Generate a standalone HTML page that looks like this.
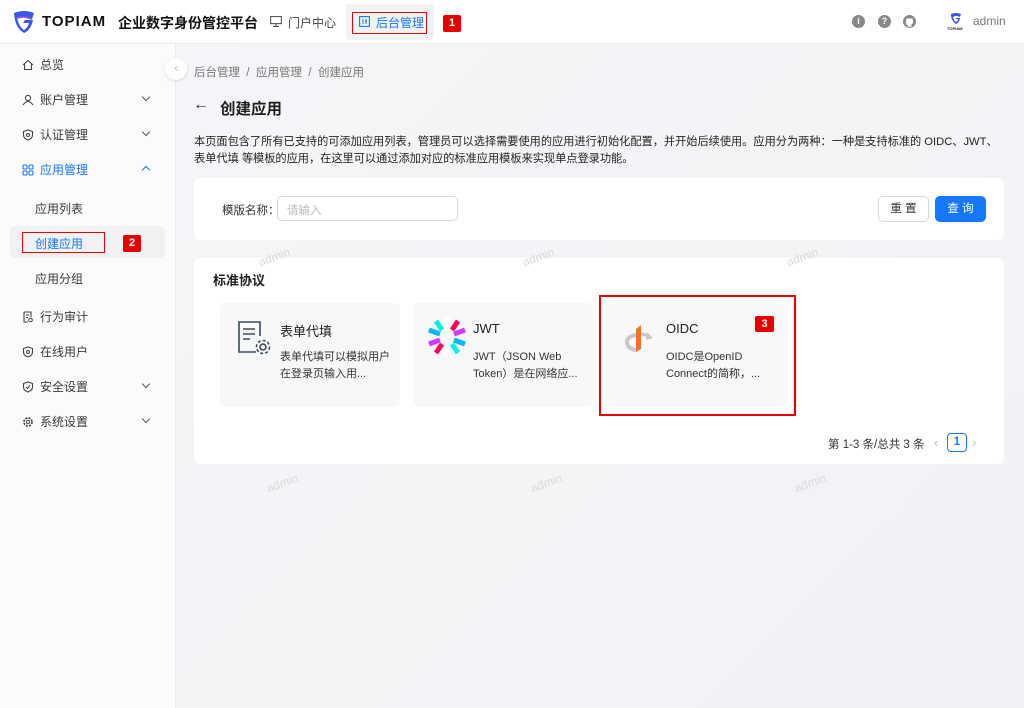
<!DOCTYPE html>
<html><head><meta charset="utf-8">
<style>
*{margin:0;padding:0;box-sizing:border-box}
body{width:1024px;height:708px;overflow:hidden;font-family:"Liberation Sans","Noto Sans CJK SC",sans-serif;background:linear-gradient(135deg,#f5f6f8,#f1f2f5);color:#262626;position:relative;font-size:12px}
.hdr{position:absolute;left:0;top:0;width:1024px;height:44px;background:#fff;border-bottom:1px solid #ececec}
.side{position:absolute;left:0;top:44px;width:176px;height:664px;background:#fbfbfc;border-right:1px solid #ececec}
.abs{position:absolute}
.mi{position:absolute;left:22px;font-size:12px;color:#3a3a3a;display:flex;align-items:center}
.mi svg{margin-right:6px}
.chev{position:absolute;left:143px;width:6px;height:6px;border-right:1.3px solid #555;border-bottom:1.3px solid #555;transform:rotate(45deg)}
.card{position:absolute;background:#fff;border-radius:6px}
.app{position:absolute;top:303px;width:180px;height:104px;background:#f7f8fa;border-radius:6px}
.app .t{position:absolute;left:60px;top:18px;font-size:13px;color:#1f1f1f}
.app .d{position:absolute;left:60px;top:46px;font-size:11px;line-height:17px;color:#333;width:112px}
.badge{position:absolute;background:#e60000;color:#fff;font-size:11px;font-weight:bold;text-align:center;border-radius:2px}
.rb{position:absolute;border:1.5px solid #e60000}
.wm{position:absolute;color:#dadada;font-size:12px;transform:rotate(-20deg)}
</style></head><body>
<div class="hdr">
 <svg class="abs" style="left:12px;top:10px" width="24" height="24" viewBox="0 0 24 24"><path d="M2 3 Q12 -1 22 3 L20 9 Q12 5 5 8 Q7 17 12 20 Q16 17 17 13 L11 13 L13 10 L21 10 Q19 20 12 23 Q3 18 2 3Z" fill="#3a58e8"/><path d="M5 8 Q12 5 20 9" stroke="#7b4dea" stroke-width="2" fill="none"/></svg>
 <div class="abs" style="left:42px;top:13px;font-size:15px;font-weight:bold;letter-spacing:1px;color:#111">TOPIAM</div>
 <div class="abs" style="left:118px;top:13px;font-size:14px;font-weight:bold;color:#111">企业数字身份管控平台</div>
 <svg class="abs" style="left:270px;top:16px" width="12" height="11" viewBox="0 0 12 11"><rect x="0.6" y="0.6" width="10.8" height="7" fill="none" stroke="#555" stroke-width="1.1"/><path d="M3 10.4H9M6 7.6V10.4" stroke="#555" stroke-width="1.1"/></svg>
 <div class="abs" style="left:288px;top:14px;font-size:12px;color:#444">门户中心</div>
 <div class="abs" style="left:346px;top:4px;width:88px;height:36px;background:#f2f3f5;border-radius:4px"></div>
 <div class="rb" style="left:352px;top:12px;width:75px;height:22px"></div>
 <svg class="abs" style="left:359px;top:16px" width="11" height="11" viewBox="0 0 11 11"><rect x="0.6" y="0.6" width="9.8" height="9.8" fill="none" stroke="#1677ff" stroke-width="1.1"/><path d="M4 3V8M7 3V8M6 5H8" stroke="#1677ff" stroke-width="1"/></svg>
 <div class="abs" style="left:376px;top:14px;font-size:12px;color:#1677ff">后台管理</div>
 <div class="badge" style="left:443px;top:15px;width:18px;height:17px;line-height:17px">1</div>
 <div class="abs" style="left:852px;top:15px;width:13px;height:13px;border-radius:50%;background:#888;color:#fff;font-size:9px;text-align:center;line-height:13px;font-weight:bold">i</div>
 <div class="abs" style="left:878px;top:15px;width:13px;height:13px;border-radius:50%;background:#888;color:#fff;font-size:9px;text-align:center;line-height:13px;font-weight:bold">?</div>
 <svg class="abs" style="left:903px;top:15px" width="13" height="13" viewBox="0 0 16 16"><circle cx="8" cy="8" r="8" fill="#888"/><path d="M5.5 14.5V12Q3 12.5 2.5 10.5Q3.5 10.5 4 11.5Q5 12 5.7 11.3Q3 10.5 3.5 7.5Q3.5 6.5 4.2 5.8Q4 4.8 4.5 3.8Q5.5 3.8 6.3 4.5Q8 4 9.7 4.5Q10.5 3.8 11.5 3.8Q12 4.8 11.8 5.8Q12.5 6.5 12.5 7.5Q13 10.5 10.3 11.3Q10.5 11.8 10.5 12.5V14.5Z" fill="#fff"/></svg>
 <svg class="abs" style="left:949px;top:13px" width="14" height="12" viewBox="0 0 14 12"><path d="M2 1 Q7 -1 12 1 L11 4 Q7 2 4 4 Q5 8 7 9 Q9 8 9 6 L6 6 L7 5 L11 5 Q10 10 7 11 Q2 8 2 1Z" fill="#3a58e8"/></svg>
 <div class="abs" style="left:947px;top:26px;font-size:4px;font-weight:bold">TOPIAM</div>
 <div class="abs" style="left:973px;top:14px;font-size:12px;color:#777">admin</div>
</div>

<div class="side">
 <div class="abs" style="left:10px;top:182px;width:155px;height:32px;background:#f0f1f3;border-radius:5px"></div>
</div>
<div class="abs" style="left:165px;top:58px;width:22px;height:22px;border-radius:50%;background:#fff;box-shadow:0 1px 3px rgba(0,0,0,.12);color:#aaa;font-size:10px;text-align:center;line-height:22px">&lsaquo;</div>

<div class="mi" style="top:56px"><svg width="12" height="12" viewBox="0 0 12 12"><path d="M1 6L6 1.5L11 6M2.5 5V10.5H9.5V5" fill="none" stroke="#444" stroke-width="1.1"/></svg>总览</div>
<div class="mi" style="top:91px"><svg width="12" height="12" viewBox="0 0 12 12"><circle cx="6" cy="4" r="2.6" fill="none" stroke="#444" stroke-width="1.1"/><path d="M1 11Q6 4 11 11" fill="none" stroke="#444" stroke-width="1.1"/></svg>账户管理</div><div class="chev" style="top:94px"></div>
<div class="mi" style="top:126px"><svg width="12" height="12" viewBox="0 0 12 12"><path d="M6 1L10.5 2.5V6Q10.5 9.5 6 11Q1.5 9.5 1.5 6V2.5Z" fill="none" stroke="#444" stroke-width="1.1"/><circle cx="6" cy="6" r="1.5" fill="none" stroke="#444"/></svg>认证管理</div><div class="chev" style="top:129px"></div>
<div class="mi" style="top:161px;color:#1677ff"><svg width="12" height="12" viewBox="0 0 12 12"><g fill="none" stroke="#1677ff" stroke-width="1.1"><rect x="1" y="1" width="4" height="4" rx="1"/><rect x="7" y="1" width="4" height="4" rx="1"/><rect x="1" y="7" width="4" height="4" rx="1"/><rect x="7" y="7" width="4" height="4" rx="1"/></g></svg>应用管理</div><div class="chev" style="top:167px;transform:rotate(225deg);border-color:#1677ff"></div>
<div class="mi" style="top:200px;left:35px">应用列表</div>
<div class="rb" style="left:22px;top:232px;width:83px;height:21px"></div>
<div class="mi" style="top:235px;left:35px;color:#1677ff">创建应用</div>
<div class="badge" style="left:123px;top:235px;width:18px;height:17px;line-height:17px">2</div>
<div class="mi" style="top:270px;left:35px">应用分组</div>
<div class="mi" style="top:308px"><svg width="12" height="12" viewBox="0 0 12 12"><path d="M2 1H9V6M2 1V11H6M4 4H7M4 6.5H6" fill="none" stroke="#444" stroke-width="1.1"/><circle cx="8.5" cy="9" r="1.8" fill="none" stroke="#444"/></svg>行为审计</div>
<div class="mi" style="top:343px"><svg width="12" height="12" viewBox="0 0 12 12"><path d="M6 1L10.5 2.5V6Q10.5 9.5 6 11Q1.5 9.5 1.5 6V2.5Z" fill="none" stroke="#444" stroke-width="1.1"/><circle cx="6" cy="6" r="1.5" fill="none" stroke="#444"/></svg>在线用户</div>
<div class="mi" style="top:378px"><svg width="12" height="12" viewBox="0 0 12 12"><path d="M6 1L10.5 2.5V6Q10.5 9.5 6 11Q1.5 9.5 1.5 6V2.5Z" fill="none" stroke="#444" stroke-width="1.1"/><path d="M4 6L5.5 7.5L8 4.5" fill="none" stroke="#444"/></svg>安全设置</div><div class="chev" style="top:381px"></div>
<div class="mi" style="top:413px"><svg width="12" height="12" viewBox="0 0 12 12"><circle cx="6" cy="6" r="4" fill="none" stroke="#444" stroke-width="1.8" stroke-dasharray="2 1.2"/><circle cx="6" cy="6" r="1.6" fill="none" stroke="#444"/></svg>系统设置</div><div class="chev" style="top:416px"></div>

<div class="abs" style="left:194px;top:64px;font-size:11.5px;color:#777">后台管理&nbsp;&nbsp;/&nbsp;&nbsp;应用管理&nbsp;&nbsp;/&nbsp;&nbsp;创建应用</div>
<div class="abs" style="left:193px;top:96px;font-size:16px;color:#333">&larr;</div>
<div class="abs" style="left:220px;top:97px;font-size:15.5px;font-weight:bold;color:#1f1f1f">创建应用</div>
<div class="abs" style="left:194px;top:134px;width:810px;font-size:11.2px;line-height:17px;color:#222">本页面包含了所有已支持的可添加应用列表，管理员可以选择需要使用的应用进行初始化配置，并开始后续使用。应用分为两种：一种是支持标准的 OIDC、JWT、表单代填 等模板的应用，在这里可以通过添加对应的标准应用模板来实现单点登录功能。</div>

<div class="card" style="left:194px;top:178px;width:810px;height:62px"></div>
<div class="abs" style="left:222px;top:202px;font-size:11.5px;color:#333">模版名称：</div>
<div class="abs" style="left:277px;top:196px;width:181px;height:25px;border:1px solid #d9d9d9;border-radius:5px;font-size:11.5px;color:#bbb;padding:5px 9px">请输入</div>
<div class="abs" style="left:878px;top:196px;width:51px;height:26px;border:1px solid #d9d9d9;border-radius:5px;font-size:11.5px;text-align:center;line-height:24px;color:#333">重 置</div>
<div class="abs" style="left:935px;top:196px;width:51px;height:26px;background:#1677ff;border-radius:5px;font-size:11.5px;text-align:center;line-height:26px;color:#fff">查 询</div>

<div class="card" style="left:194px;top:258px;width:810px;height:206px"></div>
<div class="abs" style="left:213px;top:270px;font-size:13px;font-weight:bold;color:#1f1f1f">标准协议</div>

<div class="app" style="left:220px">
 <svg class="abs" style="left:16px;top:17px" width="36" height="36" viewBox="0 0 36 36"><g fill="none" stroke="#3d4a5c" stroke-width="1.6"><path d="M20 32H3V2H24V16"/><path d="M7 9H19M7 14H19M7 19H14"/><circle cx="27" cy="27" r="3"/><circle cx="27" cy="27" r="6.5" stroke-dasharray="3 2"/></g></svg>
 <div class="t">表单代填</div><div class="d">表单代填可以模拟用户在登录页输入用...</div>
</div>
<div class="app" style="left:413px">
 <svg class="abs" style="left:14px;top:14px" width="40" height="40" viewBox="-20 -20 40 40"><g stroke-width="5" stroke-linecap="butt"><line x1="0" y1="-19" x2="0" y2="-7" stroke="#fff"/><line x1="0" y1="7" x2="0" y2="19" stroke="#fff"/><line x1="5" y1="-7" x2="11" y2="-16" stroke="#fb015b"/><line x1="-5" y1="7" x2="-11" y2="16" stroke="#fb015b"/><line x1="7" y1="-3" x2="18" y2="-7" stroke="#d63aff"/><line x1="-7" y1="3" x2="-18" y2="7" stroke="#d63aff"/><line x1="7" y1="3" x2="18" y2="7" stroke="#00b9f1"/><line x1="-7" y1="-3" x2="-18" y2="-7" stroke="#00b9f1"/><line x1="5" y1="7" x2="11" y2="16" stroke="#00f2e6"/><line x1="-5" y1="-7" x2="-11" y2="-16" stroke="#00f2e6"/></g></svg>
 <div class="t">JWT</div><div class="d">JWT（JSON Web Token）是在网络应...</div>
</div>
<div class="app" style="left:606px">
 <svg class="abs" style="left:16px;top:20px" width="34" height="30" viewBox="0 0 34 30"><path d="M14 12Q4 14 5 20Q6 26 14 27" fill="none" stroke="#c8c8c8" stroke-width="4"/><path d="M18 11Q24 11 27 14" fill="none" stroke="#c8c8c8" stroke-width="3"/><path d="M25 9L31 15L24 17Z" fill="#c8c8c8"/><path d="M14 6L19 2V26L14 29Z" fill="#f7731c"/></svg>
 <div class="t">OIDC</div><div class="d">OIDC是OpenID Connect的简称，...</div>
</div>
<div class="abs" style="left:599px;top:295px;width:197px;height:121px;border:2px solid #e60000"></div>
<div class="badge" style="left:755px;top:316px;width:19px;height:16px;line-height:16px">3</div>

<div class="abs" style="left:828px;top:436px;font-size:11.5px;color:#333">第 1-3 条/总共 3 条</div>
<div class="abs" style="left:934px;top:435px;font-size:13px;color:#bbb">&lsaquo;</div>
<div class="abs" style="left:947px;top:433px;width:20px;height:19px;border:1px solid #1677ff;border-radius:4px;color:#1677ff;font-size:11.5px;text-align:center;line-height:17px;font-weight:bold">1</div>
<div class="abs" style="left:972px;top:435px;font-size:13px;color:#bbb">&rsaquo;</div>

<div class="wm" style="left:258px;top:250px">admin</div>
<div class="wm" style="left:522px;top:250px">admin</div>
<div class="wm" style="left:786px;top:250px">admin</div>
<div class="wm" style="left:266px;top:476px">admin</div>
<div class="wm" style="left:530px;top:476px">admin</div>
<div class="wm" style="left:794px;top:476px">admin</div>
</body></html>
